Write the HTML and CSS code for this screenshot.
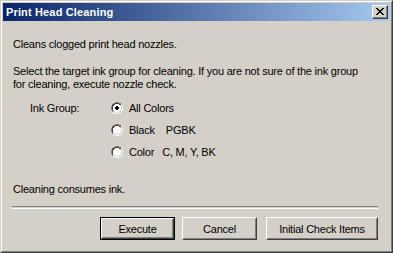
FILE: index.html
```html
<!DOCTYPE html>
<html>
<head>
<meta charset="utf-8">
<link rel="stylesheet" href="styles.css">
</head>
<body>
<div class="window">
  <div class="frame">
    <div class="titlebar">
      <span class="title">Print Head Cleaning</span>
      <span class="close">
        <svg width="8" height="7" viewBox="0 0 8 7"><path d="M0 0h2v1h1v1h2v-1h1v-1h2v1h-1v1h-1v1h-1v1h1v1h1v1h1v1h-2v-1h-1v-1h-2v1h-1v1h-2v-1h1v-1h1v-1h1v-1h-1v-1h-1v-1h-1z" fill="#000"/></svg>
      </span>
    </div>
    <div class="content">
      <p class="intro">Cleans clogged print head nozzles.</p>
      <p class="select">Select the target ink group for cleaning. If you are not sure of the ink group<br>for cleaning, execute nozzle check.</p>
      <div class="group">
        <div class="label">Ink Group:</div>
        <div class="options">
          <div class="opt">
            <svg class="radio" width="12" height="12" viewBox="0 0 12 12">
              <path d="M4 0h4v1h2v1h-2v-1h-4v1h-2v2h-1v4h1v2h-1v-2h-1v-4h1v-2h1v-1h2z" fill="#808080"/>
              <path d="M4 1h4v1h2v1h-8v-1h2z M2 2h1v1h-1z M1 3h2v1h-1v4h-1z" fill="#404040"/>
              <path d="M10 2h1v2h1v4h-1v2h-1v1h-2v1h-4v-1h-2v-1h2v1h4v-1h2v-2h1v-4h-1z" fill="#fff"/>
              <path d="M10 3h1v5h-1v2h-2v1h-4v-1h-2v-1h2v1h4v-1h2v-1z" fill="#d4d0c8"/>
              <path d="M4 2h4v1h1v1h1v4h-1v1h-1v1h-4v-1h-1v-1h-1v-4h1v-1h1z" fill="#fff"/>
              <path d="M5 4h2v1h1v2h-1v1h-2v-1h-1v-2h1z" fill="#000"/>
            </svg>
            <span>All Colors</span>
          </div>
          <div class="opt">
            <svg class="radio" width="12" height="12" viewBox="0 0 12 12">
              <path d="M4 0h4v1h2v1h-2v-1h-4v1h-2v2h-1v4h1v2h-1v-2h-1v-4h1v-2h1v-1h2z" fill="#808080"/>
              <path d="M4 1h4v1h2v1h-8v-1h2z M2 2h1v1h-1z M1 3h2v1h-1v4h-1z" fill="#404040"/>
              <path d="M10 2h1v2h1v4h-1v2h-1v1h-2v1h-4v-1h-2v-1h2v1h4v-1h2v-2h1v-4h-1z" fill="#fff"/>
              <path d="M10 3h1v5h-1v2h-2v1h-4v-1h-2v-1h2v1h4v-1h2v-1z" fill="#d4d0c8"/>
              <path d="M4 2h4v1h1v1h1v4h-1v1h-1v1h-4v-1h-1v-1h-1v-4h1v-1h1z" fill="#fff"/>
            </svg>
            <span>Black</span><span class="code code-black">PGBK</span>
          </div>
          <div class="opt">
            <svg class="radio" width="12" height="12" viewBox="0 0 12 12">
              <path d="M4 0h4v1h2v1h-2v-1h-4v1h-2v2h-1v4h1v2h-1v-2h-1v-4h1v-2h1v-1h2z" fill="#808080"/>
              <path d="M4 1h4v1h2v1h-8v-1h2z M2 2h1v1h-1z M1 3h2v1h-1v4h-1z" fill="#404040"/>
              <path d="M10 2h1v2h1v4h-1v2h-1v1h-2v1h-4v-1h-2v-1h2v1h4v-1h2v-2h1v-4h-1z" fill="#fff"/>
              <path d="M10 3h1v5h-1v2h-2v1h-4v-1h-2v-1h2v1h4v-1h2v-1z" fill="#d4d0c8"/>
              <path d="M4 2h4v1h1v1h1v4h-1v1h-1v1h-4v-1h-1v-1h-1v-4h1v-1h1z" fill="#fff"/>
            </svg>
            <span>Color</span><span class="code code-color">C, M, Y, BK</span>
          </div>
        </div>
      </div>
      <p class="note">Cleaning consumes ink.</p>
      <div class="sep"></div>
      <div class="buttons">
        <div class="btn default"><div class="btn-face">Execute</div></div>
        <div class="btn cancel"><div class="btn-face">Cancel</div></div>
        <div class="btn wide"><div class="btn-face">Initial Check Items</div></div>
      </div>
    </div>
  </div>
</div>
</body>
</html>
```
FILE: styles.css
```css
html, body {
  margin: 0;
  padding: 0;
  background: #d4d0c8;
}
body {
  font-family: "Liberation Sans", Arial, sans-serif;
  font-size: 11px;
  color: #000;
}
.window {
  width: 393px;
  height: 253px;
  box-sizing: border-box;
  border: 1px solid;
  border-color: #d4d0c8 #404040 #404040 #d4d0c8;
}
.frame {
  height: 100%;
  box-sizing: border-box;
  border: 1px solid;
  border-color: #fff #808080 #808080 #fff;
  padding: 1px;
  background: #d4d0c8;
  display: flex;
  flex-direction: column;
}
.titlebar {
  height: 18px;
  flex: none;
  background: linear-gradient(to right, #0a246a, #a6caf0);
  display: flex;
  align-items: center;
  justify-content: space-between;
  padding: 0 2px 0 3px;
}
.title {
  color: #fff;
  font-weight: bold;
  font-size: 11px;
  line-height: 13px;
  letter-spacing: 0.15px;
}
.close {
  width: 16px;
  height: 14px;
  box-sizing: border-box;
  background: #d4d0c8;
  border: 1px solid;
  border-color: #fff #404040 #404040 #fff;
  box-shadow: inset -1px -1px 0 #808080;
  display: flex;
  align-items: center;
  justify-content: center;
  padding-bottom: 1px;
}
.close svg {
  display: block;
}
.content {
  padding: 0 12px 0 10px;
  display: flex;
  flex-direction: column;
  letter-spacing: -0.22px;
}
p {
  margin: 0;
  line-height: 13px;
}
.intro {
  margin-top: 17px;
}
.select {
  margin-top: 14px;
}
.group {
  display: flex;
  margin-top: 6px;
}
.label {
  width: 81px;
  padding-left: 17px;
  line-height: 22px;
}
.options {
  display: flex;
  flex-direction: column;
}
.opt {
  height: 22px;
  display: flex;
  align-items: center;
}
.radio {
  display: block;
  margin-right: 6px;
}
.code-black {
  margin-left: 11px;
}
.code-color {
  margin-left: 8px;
}
.note {
  margin-top: 20px;
}
.sep {
  margin: 10px 0 0 -1px;
  height: 1px;
  border-top: 1px solid #808080;
  border-bottom: 1px solid #fff;
}
.buttons {
  display: flex;
  justify-content: flex-end;
  margin-top: 8px;
  gap: 7px;
}
.btn {
  height: 23px;
  box-sizing: border-box;
  border: 1px solid;
  border-color: #fff #404040 #404040 #fff;
}
.btn.default {
  border: 1px solid #000;
}
.btn-face {
  height: 100%;
  box-sizing: border-box;
  border: 1px solid;
  border-color: #d4d0c8 #808080 #808080 #d4d0c8;
  display: flex;
  align-items: center;
  justify-content: center;
}
.btn.default .btn-face {
  border-color: #fff #404040 #404040 #fff;
  box-shadow: inset -1px -1px 0 #808080;
}
.btn.default, .btn.cancel {
  width: 75px;
}
.btn.cancel {
  margin-right: 2px;
}
.btn.wide {
  width: 112px;
}
```
